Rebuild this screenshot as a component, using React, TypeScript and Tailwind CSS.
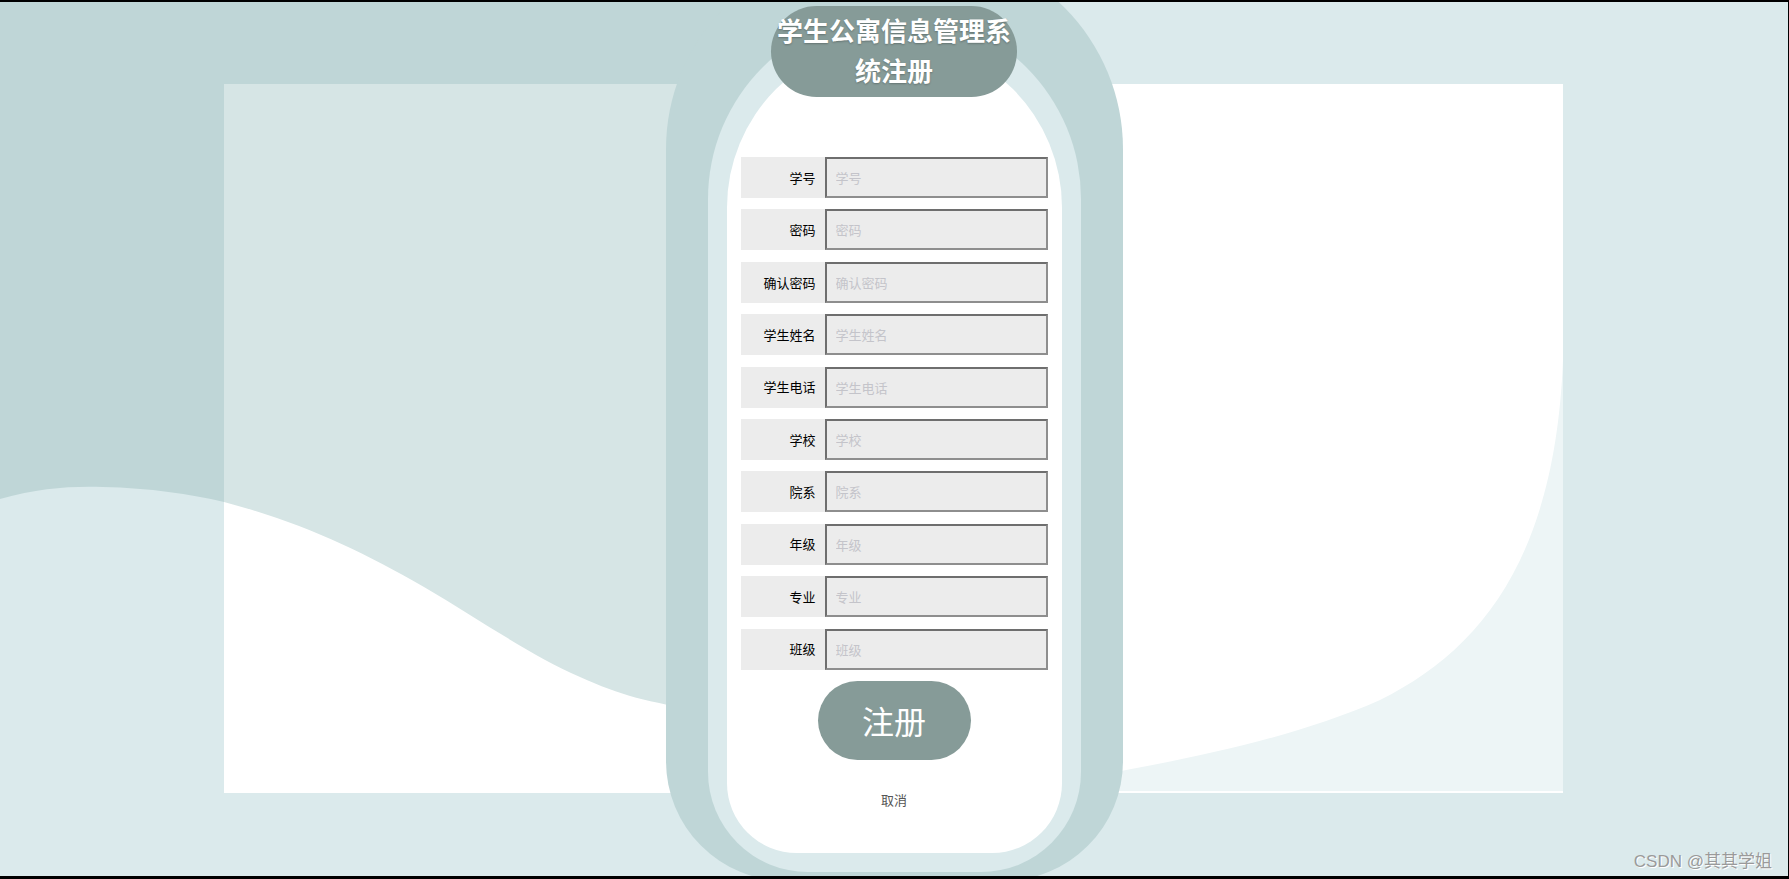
import React from "react";

const fields = ["学号", "密码", "确认密码", "学生姓名", "学生电话", "学校", "院系", "年级", "专业", "班级"];

// the wave that runs along the left side, used twice (outside and inside the panel)
const wave =
  "M0,0 L0,499 C40,488 70,486 103,487 C150,488 190,494 224,502 C300,522 360,550 424,587 C480,620 530,655 580,677 C620,695 650,703 700,710 L900,712 L900,0 Z";

function Backdrop() {
  return (
    <svg
      className="absolute inset-0 h-full w-full"
      viewBox="0 2 1788 874"
      preserveAspectRatio="none"
    >
      <rect x="0" y="0" width="1789" height="879" fill="#dbeaec" />
      <path d={wave} fill="#bfd6d7" />
      <defs>
        <clipPath id="panel">
          <rect x="224" y="84" width="1339" height="709" />
        </clipPath>
      </defs>
      <g clipPath="url(#panel)">
        <rect x="224" y="84" width="1339" height="709" fill="#ffffff" />
        <path d={wave} fill="#d6e5e5" />
        <path
          d="M1563,360 C1555,560 1480,650 1380,700 C1290,740 1180,760 1100,775 L1100,791 L1563,791 Z"
          fill="#edf5f6"
        />
      </g>
    </svg>
  );
}

function Field({ label }: { label: string }) {
  return (
    <div className="flex h-[41px] w-[307px]">
      <div className="flex w-[84px] items-center justify-end bg-[#ececec] pr-[9px] text-[13px] text-black">
        {label}
      </div>
      <input
        placeholder={label}
        className="h-full w-[223px] border-2 border-[#8e8e8e] border-l-[#6e6e6e] border-t-[#6e6e6e] bg-[#ececec] pl-[9px] text-[13px] text-black outline-none placeholder:text-[#c4c4ca]"
      />
    </div>
  );
}

export default function App() {
  return (
    <div className="relative h-[879px] w-full overflow-hidden border-t-2 border-r border-b-[3px] border-black bg-[#dbeaec] font-['Noto_Sans_CJK_SC',sans-serif]">
      <Backdrop />

      <div className="relative flex justify-center">
        {/* outer ring */}
        <div className="-mt-[53px] flex h-[932px] w-[457px] flex-col rounded-t-[200px] rounded-b-[120px] bg-[#bfd6d7] px-[42px] pt-[64px] pb-[9px]">
          {/* middle ring */}
          <div className="flex flex-1 flex-col rounded-t-[186px] rounded-b-[100px] bg-[#dbeaec] px-[19px] pt-[27px] pb-[19px]">
            {/* white card */}
            <div className="flex flex-1 flex-col items-center rounded-t-[168px] rounded-b-[70px] bg-white">
              <div className="-mt-[34px] flex h-[91px] w-[246px] items-center justify-center rounded-full bg-[#869b98] pb-[3px] text-center text-[26px] leading-[40px] font-bold text-white [text-shadow:0_1px_2px_rgba(0,0,0,0.25)]">
                学生公寓信息管理系
                <br />
                统注册
              </div>

              <div className="mt-[60px] flex flex-col gap-[11.4px]">
                {fields.map((f) => (
                  <Field key={f} label={f} />
                ))}
              </div>

              <button className="mt-[11px] h-[79px] w-[153px] rounded-full bg-[#869b98] text-[32px] text-white">
                注册
              </button>

              <div className="mt-[31px] text-[13px] leading-[18px] text-[#555555]">取消</div>
            </div>
          </div>
        </div>
      </div>

      <div className="absolute right-[16px] bottom-[4px] font-['Liberation_Sans','Noto_Sans_CJK_SC',sans-serif] text-[17px] leading-[20px] text-[#9a9a9a] [text-shadow:1px_1px_0_#ffffff]">
        CSDN @其其学姐
      </div>
    </div>
  );
}
